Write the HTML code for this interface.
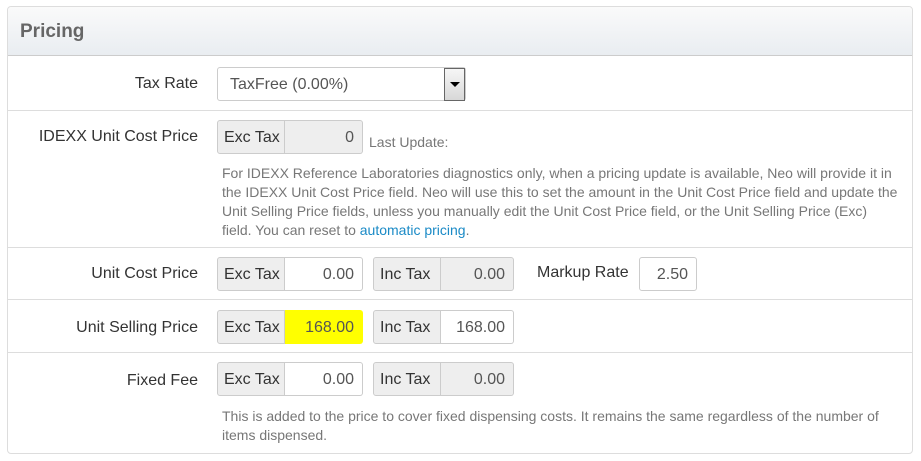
<!DOCTYPE html>
<html><head><style>
*{box-sizing:border-box;margin:0;padding:0}
body{width:921px;height:461px;background:#fff;font-family:"Liberation Sans",Arial,sans-serif;color:#333;position:relative;overflow:hidden}
.a{position:absolute}
.panel{left:7px;top:6px;width:906px;height:448px;border:1px solid #ddd;border-radius:4px}
.head{left:8px;top:7px;width:904px;height:49px;background:linear-gradient(#fafafa,#e9edf1);border-bottom:1px solid #ccc;border-radius:4px 4px 0 0}
.hr{left:8px;width:904px;height:1px;background:#ddd}
.lbl{font-size:16px;right:723px;text-align:right;white-space:nowrap}
.addon{height:34px;width:68px;background:#eee;border:1px solid #ccc;border-radius:3px 0 0 3px;font-size:16px;line-height:33px;padding-left:6px}
.inp{height:34px;width:78px;background:#fff;border:1px solid #ccc;border-left:none;border-radius:0 3px 3px 0;font-size:16px;line-height:33px;text-align:right;padding-right:8px;color:#555}
.ro{background:#eee}
.help{font-size:14px;color:#777;line-height:19px;white-space:nowrap}
</style></head><body>
<div class="a panel"></div>
<div class="a head"></div>
<div class="a" style="left:20px;top:21px;font-size:19px;font-weight:bold;color:#666">Pricing</div>
<div class="a hr" style="top:110px"></div>
<div class="a hr" style="top:247px"></div>
<div class="a hr" style="top:299px"></div>
<div class="a hr" style="top:352px"></div>

<div class="a lbl" style="top:75px">Tax Rate</div>
<div class="a" style="left:217px;top:67px;width:249px;height:34px;border:1px solid #ccc;border-radius:3px;font-size:16px;line-height:33px;padding-left:12px;color:#555">TaxFree (0.00%)</div>
<div class="a" style="left:444px;top:68px;width:21px;height:33px;border:1px solid #666;background:linear-gradient(#f6f6f6,#d8d8d8)"><div style="position:absolute;left:5px;top:13px;width:0;height:0;border-left:5px solid transparent;border-right:5px solid transparent;border-top:5px solid #000"></div></div>

<div class="a lbl" style="top:128px">IDEXX Unit Cost Price</div>
<div class="a addon" style="left:217px;top:120px">Exc Tax</div>
<div class="a inp ro" style="left:285px;top:120px">0</div>
<div class="a" style="left:369px;top:134px;font-size:14px;color:#777">Last Update:</div>
<div class="a help" style="left:222px;top:164px">For IDEXX Reference Laboratories diagnostics only, when a pricing update is available, Neo will provide it in<br>the IDEXX Unit Cost Price field. Neo will use this to set the amount in the Unit Cost Price field and update the<br>Unit Selling Price fields, unless you manually edit the Unit Cost Price field, or the Unit Selling Price (Exc)<br>field. You can reset to <span style="color:#1a8ac6">automatic pricing</span>.</div>

<div class="a lbl" style="top:265px">Unit Cost Price</div>
<div class="a addon" style="left:217px;top:257px">Exc Tax</div>
<div class="a inp" style="left:285px;top:257px">0.00</div>
<div class="a addon" style="left:373px;top:257px">Inc Tax</div>
<div class="a inp ro" style="left:441px;top:257px;width:73px">0.00</div>
<div class="a" style="left:537px;top:264px;font-size:16px">Markup Rate</div>
<div class="a inp" style="left:639px;top:257px;width:58px;border-left:1px solid #ccc;border-radius:3px">2.50</div>

<div class="a lbl" style="top:319px">Unit Selling Price</div>
<div class="a addon" style="left:217px;top:310px">Exc Tax</div>
<div class="a inp" style="left:285px;top:310px;background:#ffff00;border-color:#ffff00">168.00</div>
<div class="a addon" style="left:373px;top:310px">Inc Tax</div>
<div class="a inp" style="left:441px;top:310px;width:73px">168.00</div>

<div class="a lbl" style="top:372px">Fixed Fee</div>
<div class="a addon" style="left:217px;top:362px">Exc Tax</div>
<div class="a inp" style="left:285px;top:362px">0.00</div>
<div class="a addon" style="left:373px;top:362px">Inc Tax</div>
<div class="a inp ro" style="left:441px;top:362px;width:73px">0.00</div>
<div class="a help" style="left:222px;top:407px">This is added to the price to cover fixed dispensing costs. It remains the same regardless of the number of<br>items dispensed.</div>
</body></html>
